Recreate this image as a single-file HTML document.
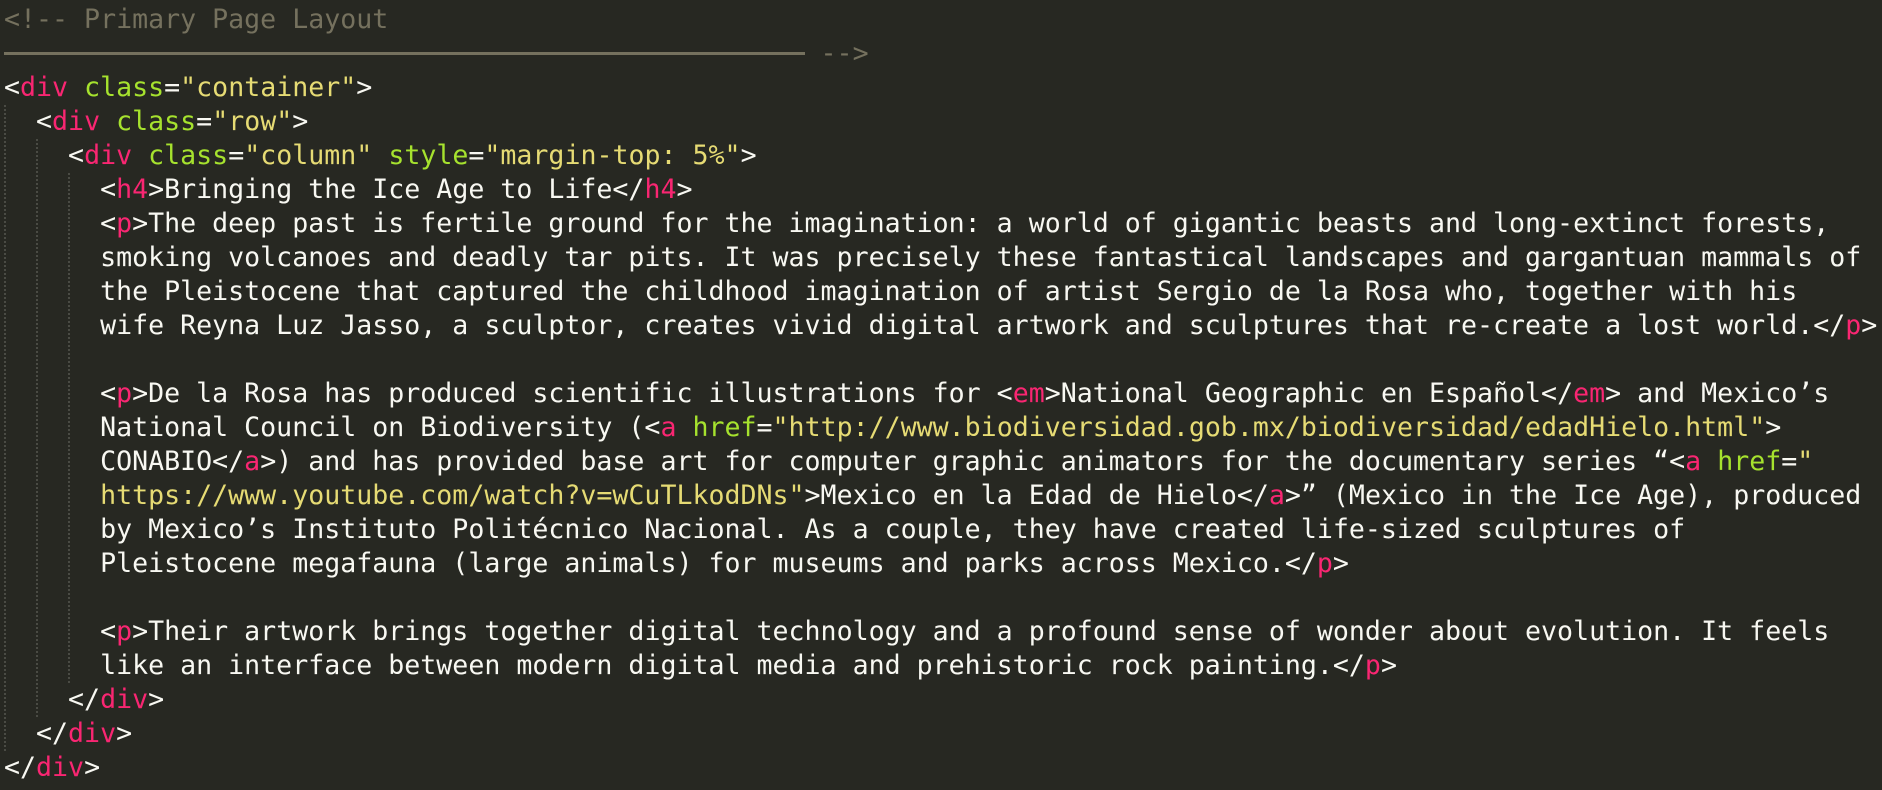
<!DOCTYPE html>
<html><head><meta charset="utf-8"><style>
html,body{margin:0;padding:0;background:#272822;width:1882px;height:790px;overflow:hidden}
.code{position:absolute;left:4px;top:3px;font-family:"DejaVu Sans Mono","Liberation Mono",monospace;font-size:26.6px;line-height:34px;color:#F8F8F2;white-space:pre}
.c{color:#75715E}.t{color:#F92672}.a{color:#A6E22E}.s{color:#E6DB74}
.g{position:absolute;width:0;border-left:2px dotted #4a4b44}
.dash{display:inline-block;width:50ch;height:3px;background:#75715E;vertical-align:middle;position:relative;top:-1px}
</style></head><body>
<div class="g" style="left:4px;top:105px;height:646px"></div>
<div class="g" style="left:36px;top:139px;height:578px"></div>
<div class="g" style="left:68px;top:173px;height:510px"></div>
<div class="code"><span class="c">&lt;!-- Primary Page Layout</span>
<span class="c"><span class="dash"></span> --&gt;</span>
&lt;<span class="t">div</span> <span class="a">class</span>=<span class="s">"container"</span>&gt;
  &lt;<span class="t">div</span> <span class="a">class</span>=<span class="s">"row"</span>&gt;
    &lt;<span class="t">div</span> <span class="a">class</span>=<span class="s">"column"</span> <span class="a">style</span>=<span class="s">"margin-top: 5%"</span>&gt;
      &lt;<span class="t">h4</span>&gt;Bringing the Ice Age to Life&lt;/<span class="t">h4</span>&gt;
      &lt;<span class="t">p</span>&gt;The deep past is fertile ground for the imagination: a world of gigantic beasts and long-extinct forests,
      smoking volcanoes and deadly tar pits. It was precisely these fantastical landscapes and gargantuan mammals of
      the Pleistocene that captured the childhood imagination of artist Sergio de la Rosa who, together with his
      wife Reyna Luz Jasso, a sculptor, creates vivid digital artwork and sculptures that re-create a lost world.&lt;/<span class="t">p</span>&gt;

      &lt;<span class="t">p</span>&gt;De la Rosa has produced scientific illustrations for &lt;<span class="t">em</span>&gt;National Geographic en Español&lt;/<span class="t">em</span>&gt; and Mexico’s
      National Council on Biodiversity (&lt;<span class="t">a</span> <span class="a">href</span>=<span class="s">"http://www.biodiversidad.gob.mx/biodiversidad/edadHielo.html"</span>&gt;
      CONABIO&lt;/<span class="t">a</span>&gt;) and has provided base art for computer graphic animators for the documentary series “&lt;<span class="t">a</span> <span class="a">href</span>=<span class="s">"</span>
<span class="s">      https://www.youtube.com/watch?v=wCuTLkodDNs"</span>&gt;Mexico en la Edad de Hielo&lt;/<span class="t">a</span>&gt;” (Mexico in the Ice Age), produced
      by Mexico’s Instituto Politécnico Nacional. As a couple, they have created life-sized sculptures of
      Pleistocene megafauna (large animals) for museums and parks across Mexico.&lt;/<span class="t">p</span>&gt;

      &lt;<span class="t">p</span>&gt;Their artwork brings together digital technology and a profound sense of wonder about evolution. It feels
      like an interface between modern digital media and prehistoric rock painting.&lt;/<span class="t">p</span>&gt;
    &lt;/<span class="t">div</span>&gt;
  &lt;/<span class="t">div</span>&gt;
&lt;/<span class="t">div</span>&gt;</div>
</body></html>
